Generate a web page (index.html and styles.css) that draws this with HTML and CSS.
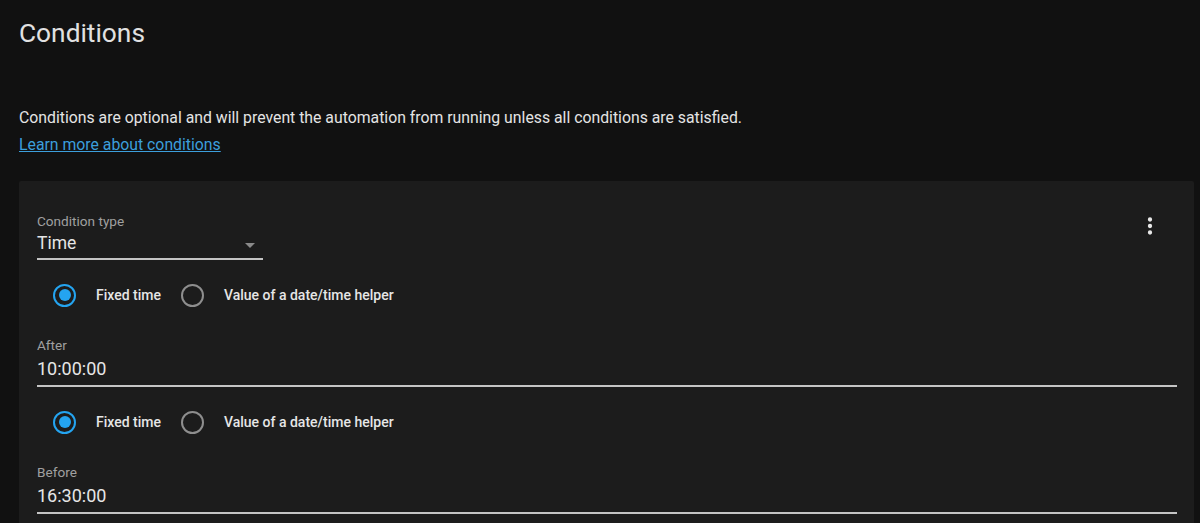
FILE: index.html
```html
<!DOCTYPE html>
<html>
<head>
<meta charset="utf-8">
<link rel="stylesheet" href="styles.css">
</head>
<body>
<div class="page">
  <h1 class="title">Conditions</h1>
  <p class="desc">Conditions are optional and will prevent the automation from running unless all conditions are satisfied.</p>
  <a class="link" href="#">Learn more about conditions</a>
  <div class="card">
    <div class="card-head">
      <div class="select">
        <div class="field-label">Condition type</div>
        <div class="select-row">
          <span class="field-value">Time</span>
          <span class="arrow"></span>
        </div>
      </div>
      <svg class="menu" width="26" height="26" viewBox="0 0 24 24"><path fill="#e8e8e8" d="M12,16A2,2 0 0,1 14,18A2,2 0 0,1 12,20A2,2 0 0,1 10,18A2,2 0 0,1 12,16M12,10A2,2 0 0,1 14,12A2,2 0 0,1 12,14A2,2 0 0,1 10,12A2,2 0 0,1 12,10M12,4A2,2 0 0,1 14,6A2,2 0 0,1 12,8A2,2 0 0,1 10,6A2,2 0 0,1 12,4Z"/></svg>
    </div>
    <div class="radios">
      <span class="radio checked"></span><span class="radio-label">Fixed time</span>
      <span class="radio"></span><span class="radio-label">Value of a date/time helper</span>
    </div>
    <div class="field">
      <div class="field-label">After</div>
      <div class="field-value">10:00:00</div>
    </div>
    <div class="radios">
      <span class="radio checked"></span><span class="radio-label">Fixed time</span>
      <span class="radio"></span><span class="radio-label">Value of a date/time helper</span>
    </div>
    <div class="field">
      <div class="field-label">Before</div>
      <div class="field-value">16:30:00</div>
    </div>
  </div>
</div>
</body>
</html>
```
FILE: styles.css
```css
html, body {
  margin: 0;
  padding: 0;
  background: #111111;
  font-family: Roboto, "Liberation Sans", sans-serif;
  color: #e1e1e1;
  height: 100%;
  overflow: hidden;
}
.page {
  padding: 18px 6px 0 19px;
}
.title {
  margin: 0;
  font-size: 26.3px;
  font-weight: 400;
  line-height: 30px;
  color: #e1e1e1;
}
.desc {
  margin: 56px 0 0 0;
  font-size: 15.8px;
  line-height: 27px;
  color: #e4e4e4;
}
.link {
  display: block;
  width: max-content;
  font-size: 15.8px;
  line-height: 28px;
  color: #3c9fdc;
  text-decoration: underline;
}
.card {
  margin-top: 22px;
  background: #1c1c1c;
  border-radius: 2px;
  padding: 30px 17px 0 18px;
  height: 400px;
}
.card-head {
  display: flex;
  justify-content: space-between;
  align-items: flex-start;
}
.menu {
  margin-top: 2px;
  margin-right: 14px;
}
.select {
  width: 226px;
  border-bottom: 2px solid #c4c4c4;
}
.field-label {
  font-size: 13.6px;
  line-height: 20px;
  color: #a0a0a0;
}
.field-value {
  font-size: 17.5px;
  line-height: 24px;
  color: #e6e6e6;
}
.field .field-value {
  margin-top: 2px;
  font-size: 18px;
}
.select-row {
  display: flex;
  justify-content: space-between;
  align-items: center;
  height: 24px;
  padding-bottom: 3px;
}
.arrow {
  width: 0;
  height: 0;
  border-left: 5px solid transparent;
  border-right: 5px solid transparent;
  border-top: 5px solid #8a8a8a;
  margin-right: 8px;
  margin-top: 4px;
}
.radios {
  display: flex;
  align-items: center;
  height: 50px;
  margin-top: 10px;
  padding-left: 16px;
}
.radio {
  box-sizing: border-box;
  width: 23px;
  height: 23px;
  border-radius: 50%;
  border: 2px solid #8e8e8e;
  margin-right: 20px;
  position: relative;
}
.radio.checked {
  border-color: #24a4f0;
}
.radio.checked::after {
  content: "";
  position: absolute;
  left: 3.5px;
  top: 3.5px;
  width: 12px;
  height: 12px;
  border-radius: 50%;
  background: #24a4f0;
}
.radio-label {
  font-size: 14px;
  font-weight: 500;
  color: #e6e6e6;
  margin-right: 20px;
}
.field {
  margin-top: 15px;
  border-bottom: 2px solid #c4c4c4;
  padding-bottom: 4px;
}
```
